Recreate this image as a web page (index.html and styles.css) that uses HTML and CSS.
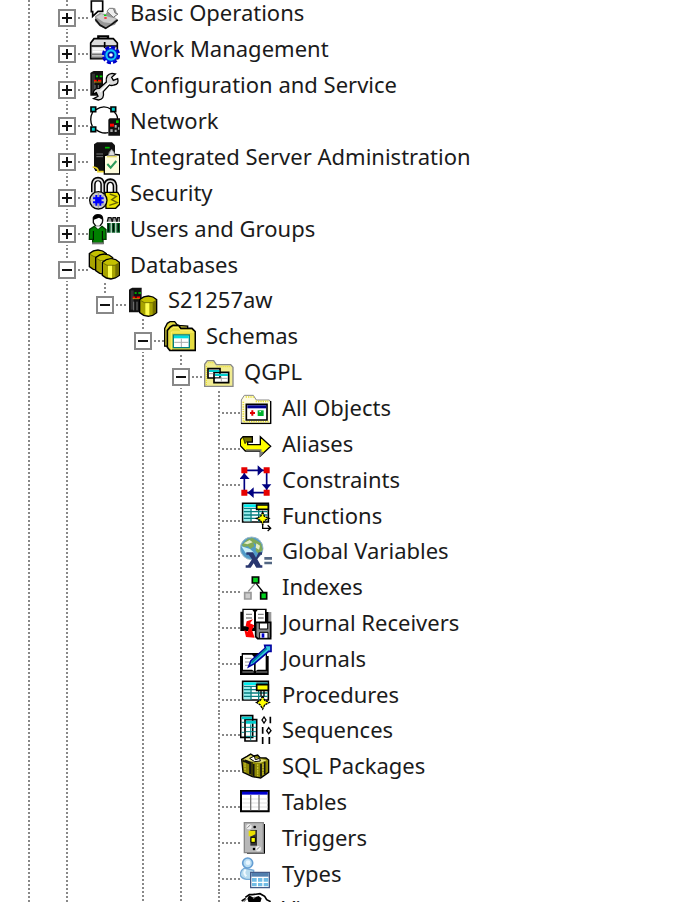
FILE: index.html
```html
<!DOCTYPE html>
<html lang="en">
<head>
<meta charset="utf-8">
<title>System Navigator</title>
<link rel="stylesheet" href="styles.css">
</head>
<body>
<svg class="defs" aria-hidden="true">
  <defs>
    <g id="server"><path d="M4 3l6-3h28v66l-6 8H0V6z" fill="#111"/><path d="M5 8h9v58H5z" fill="#333"/><path d="M17 16h6m5 0h8" stroke="#0c0" stroke-width="5"/><path d="M11 29h8m4 0h10" stroke="#f00" stroke-width="5"/><path d="M11 33h22" stroke="#fc0" stroke-width="2"/><path d="M14 42v26m10-26v26" stroke="#777" stroke-width="3"/></g>
    <g id="drum"><path d="M2 12L14 4l14-3 14 3 11 8v39L41 59l-13 3-14-3L2 51z" fill="#a8a400" stroke="#000" stroke-width="4"/><path d="M5 13l11-7 12-3 13 3 9 7-10 6H16z" fill="#c4c000"/><path d="M19 21h12v38l-12-2z" fill="#ffff50"/><path d="M41 21l10-6v35l-10 7z" fill="#747000"/><path d="M4 14l12 7h24l12-7" fill="none" stroke="#5d5a00" stroke-width="2"/></g>
    <g id="grid"><path d="M2 2h77v56H2z" fill="#fff" stroke="#000" stroke-width="5"/><path d="M5 5h38v8H5z" fill="#0ee"/><path d="M43 5h34v8H43z" fill="#087f80"/><path d="M5 15h20v41H5z" fill="#9ee"/><path d="M5 17h72M5 27h72M5 37h72M5 47h72M27 15v42M50 15v42" stroke="#087f80" stroke-width="4"/></g>
    <g id="window"><path d="M2 2h48v38H2z" fill="#fff" stroke="#008080" stroke-width="4"/><path d="M4 4h44v8H4z" fill="#0dd"/><path d="M5 24h42M26 13v25" stroke="#aaa" stroke-width="3"/></g>
    <g id="lock"><path d="M11 43V18Q13 3 25 3t14 15v25" fill="none" stroke="#000" stroke-width="14"/><path d="M11 43V18Q13 4 25 4t14 14v25" fill="none" stroke="#ddd" stroke-width="5"/></g>
  </defs>
</svg>
<main class="pane">
<ul class="tree">
  <li class="node">
    <ul class="branch">
      <li class="node"><div class="row"><button class="toggle" aria-label="Expand Basic Operations"></button>
        <svg class="icon" viewBox="0 0 96 108"><path d="M10 15h34v31H30L14 61V47H10z" fill="#fff" stroke="#000" stroke-width="5"/><path d="M21 61l14-10 18 3 10-14 18-4 7 19-9 8 11 8-9 15-14 5-15 7-17-7-14-15z" fill="#999"/><path d="M24 63l16-9 21 8 24 6-15 14-23-3z" fill="#ccc"/><path d="M57 46l7-9h12l5 14 9 3-14 10z" fill="#eee" stroke="#777" stroke-width="3"/><path d="M48 58h7" stroke="#0d0" stroke-width="4"/><path d="M49 66h7" stroke="red" stroke-width="4"/><path d="M22 70l14 17 17 10 17-11 19-14" fill="none" stroke="#111" stroke-width="5"/></svg>
        <span class="label">Basic Operations</span></div></li>
      <li class="node"><div class="row"><button class="toggle" aria-label="Expand Work Management"></button>
        <svg class="icon" viewBox="0 0 96 108"><path d="M31 22v-9h29v9" fill="none" stroke="#000" stroke-width="7"/><path d="M8 33l10-13h58l12 13v47H8z" fill="#ddd" stroke="#000" stroke-width="5"/><path d="M10 42h78M50 30v18" stroke="#000" stroke-width="5"/><path d="M14 51h37M14 59h37" stroke="#fff" stroke-width="5"/><path d="M11 67h38M11 76h40" stroke="#777" stroke-width="5"/><circle cx="69" cy="69" r="23" fill="none" stroke="#0000c8" stroke-width="9" stroke-dasharray="12 6"/><circle cx="69" cy="69" r="19" fill="#13c5f5" stroke="#001de0" stroke-width="4"/><circle cx="69" cy="69" r="8" fill="#fff" stroke="#0010b0" stroke-width="5"/></svg>
        <span class="label">Work Management</span></div></li>
      <li class="node"><div class="row"><button class="toggle" aria-label="Expand Configuration and Service"></button>
        <svg class="icon" viewBox="0 0 96 108"><use href="#server" x="7" y="9"/><path d="M82 18l-11 10 5 9 13-5q5 17-11 19-8 3-14 0L46 71q4 24-15 25l-14-4 13-7-5-11-10 4q1-17 19-17l21-19q-3-24 17-26z" fill="#ddd" stroke="#000" stroke-width="4"/><path d="M36 72l28-27" stroke="#fff" stroke-width="4"/></svg>
        <span class="label">Configuration and Service</span></div></li>
      <li class="node"><div class="row"><button class="toggle" aria-label="Expand Network"></button>
        <svg class="icon" viewBox="0 0 96 108"><path d="M24 17Q47 1 70 16m9 9q12 9 9 28M14 24Q3 45 13 67m12 10q14 13 36 9" fill="none" stroke="#000" stroke-width="4"/><path d="M9 9h14v14H9zM69 9h14v14H69zM9 69h14v14H9z" fill="#0cc" stroke="#000" stroke-width="5"/><path d="M65 43h31v52H61V47z" fill="#111"/><path d="M84 49h8v8h-8z" fill="#0c0"/><path d="M66 59h12v9H66z" fill="red"/><path d="M67 76h7v8h-7zm13-13h6v8h-6zm0 14h6v7h-6zm10-7h4v7h-4z" fill="#aaa"/></svg>
        <span class="label">Network</span></div></li>
      <li class="node"><div class="row"><button class="toggle" aria-label="Expand Integrated Server Administration"></button>
        <svg class="icon" viewBox="0 0 96 108"><path d="M18 13l9-6h45l9 9v77H22l-4-8z" fill="#111"/><path d="M25 42h20M25 50h20" stroke="#777" stroke-width="3"/><path d="M51 23h14" stroke="#0b0" stroke-width="5"/><path d="M14 81q18 2 16 14h18" fill="none" stroke="#ecd52a" stroke-width="5"/><path d="M49 47l20-5 26 3v57H49z" fill="#fffddd" stroke="#000" stroke-width="4"/><path d="M61 47q0-10 10-19 9 9 10 19z" fill="#ddd" stroke="#777" stroke-width="3"/><path d="M57 50h29" stroke="#e5d862" stroke-width="4"/><path d="M58 72l10 11 17-20" fill="none" stroke="#2d9b59" stroke-width="6"/></svg>
        <span class="label">Integrated Server Administration</span></div></li>
      <li class="node"><div class="row"><button class="toggle" aria-label="Expand Security"></button>
        <svg class="icon" viewBox="0 0 96 108"><use href="#lock" x="42" y="11"/><path d="M51 49h38l6 10v26L83 97H54z" fill="#e9e400" stroke="#000" stroke-width="4"/><path d="M65 54l20 7-14 10 17 9-24 8" fill="none" stroke="#686300" stroke-width="4"/><use href="#lock" x="5" y="6"/><circle cx="31" cy="73" r="26" fill="#ccc" stroke="#000" stroke-width="4"/><path d="M11 56l39 34M50 56L13 91M31 50v47" stroke="#888" stroke-width="2"/><path d="M25 57v32m12-32v32M15 67h32M15 79h32" stroke="#00f" stroke-width="6"/><circle cx="31" cy="73" r="9" fill="#00f"/></svg>
        <span class="label">Security</span></div></li>
      <li class="node"><div class="row"><button class="toggle" aria-label="Expand Users and Groups"></button>
        <svg class="icon" viewBox="0 0 96 108"><path d="M57 33h11v29H57zM71 33h11v29H71zM85 33h11v29H85z" fill="#075d26"/><path d="M58 29l3-12h8l4 12 2-12h8l4 12 2-12h7v12" fill="#999" stroke="#111" stroke-width="4"/><path d="M61 35v24m15-24v24m15-24v24" stroke="#000" stroke-width="3"/><path d="M16 32V17q6-12 20-8 11 4 7 23L35 43H24z" fill="#fff" stroke="#111" stroke-width="4"/><path d="M16 24V14q8-10 21-5 9 3 6 14L33 17z" fill="#000"/><path d="M5 52l14-9 11 7 12-7 12 10v29H45v12H14V82H4z" fill="#008000" stroke="#003c00" stroke-width="4"/><path d="M21 43l9 8 10-8" fill="#fff"/><path d="M16 57v27m27-27v27" stroke="#000" stroke-width="3"/><path d="M12 94h35" stroke="#777" stroke-width="6"/></svg>
        <span class="label">Users and Groups</span></div></li>
      <li class="node"><div class="row"><button class="toggle open" aria-label="Collapse Databases"></button>
        <svg class="icon" viewBox="0 0 96 108"><use href="#drum" x="2" y="5"/><use href="#drum" x="21" y="17"/><use href="#drum" x="41" y="31"/></svg>
        <span class="label">Databases</span></div>
        <ul class="branch tight">
          <li class="node last"><div class="row"><button class="toggle open" aria-label="Collapse S21257aw"></button>
            <svg class="icon" viewBox="0 0 96 108"><use href="#server" x="9" y="14"/><use href="#drum" x="39" y="38"/></svg>
            <span class="label">S21257aw</span></div>
            <ul class="branch">
              <li class="node"><div class="row"><button class="toggle open" aria-label="Collapse Schemas"></button>
                <svg class="icon" viewBox="0 0 96 108"><path d="M2 81V28l8-15 8-5h14l9 11 30 2v13L19 82z" fill="#e5dc40" stroke="#000" stroke-width="4"/><path d="M17 94L10 85V34l9-10 8-5h17l6 9h34l10 10v56z" fill="#e5dc40" stroke="#000" stroke-width="5"/><path d="M19 34l8-8h16l7 9h34M22 92V39h67" fill="none" stroke="#fff36a" stroke-width="3"/><use href="#window" x="26" y="46"/></svg>
                <span class="label">Schemas</span></div>
                <ul class="branch">
                  <li class="node"><div class="row"><button class="toggle open" aria-label="Collapse QGPL"></button>
                    <svg class="icon" viewBox="0 0 96 108"><path d="M8 94V28l8-11h19l8 12h43l7 8v57z" fill="#f1ec91" stroke="#888" stroke-width="4"/><path d="M13 90V33m6-10h15M44 35h40" stroke="#e9da20" stroke-width="3" stroke-dasharray="3 3"/><path d="M18 41h36v28H18zM36 52h44v31H36z" fill="#fff" stroke="#000" stroke-width="5"/><path d="M21 45h31v6H21zM39 56h39v7H39z" fill="#0cc"/><path d="M21 56h13M40 70h37M58 65v15" stroke="#aaa" stroke-width="3"/></svg>
                    <span class="label">QGPL</span></div>
                    <ul class="branch leaves">
                      <li class="node"><div class="row leaf"><svg class="icon" viewBox="0 0 96 108"><path d="M4 96V27l9-14h27l9 14h39l4 6v65H4z" fill="#fffce0" stroke="#888" stroke-width="3"/><path d="M3 97h89V30" fill="none" stroke="#000" stroke-width="4"/><path d="M10 92V29m7-11h25M47 31h38M12 92h77" stroke="#e6df39" stroke-width="5" stroke-dasharray="4 3"/><path d="M19 40h62v47H19z" fill="#fff" stroke="#000" stroke-width="5"/><path d="M22 43h57v9H22z" fill="#000090"/><path d="M30 66h15m-8-8v16" stroke="#e00000" stroke-width="6"/><path d="M53 58h18v17H53z" fill="#00b52c"/><path d="M58 62h5" stroke="#fff" stroke-width="3"/></svg><span class="label">All Objects</span></div></li>
                      <li class="node"><div class="row leaf"><svg class="icon" viewBox="0 0 96 108"><path d="M1 38l8-9h28v16H23v8h38V29l31 29-31 29V72H16L1 56z" fill="#ff0" stroke="#000" stroke-width="4"/><path d="M9 31h27v13H20l-5 6z" fill="#777400" stroke="#000" stroke-width="2"/><path d="M18 69h44v14l7-8" fill="none" stroke="#777" stroke-width="5"/></svg><span class="label">Aliases</span></div></li>
                      <li class="node"><div class="row leaf"><svg class="icon" viewBox="0 0 96 108"><path d="M13 22h67v67H13z" fill="none" stroke="#000080" stroke-width="5"/><path d="M53 7l17 15-17 16zM65 64h29L80 80zM41 73v32L23 89zM-2 48l15-17 16 17z" fill="#000080"/><path d="M4 13h18v18H4zM71 13h18v18H71zM4 80h18v18H4zM71 80h18v18H71z" fill="#e60000"/></svg><span class="label">Constraints</span></div></li>
                      <li class="node"><div class="row leaf"><svg class="icon" viewBox="0 0 96 108"><use href="#grid" x="6" y="11"/><path d="M50 18h35v13H50z" fill="#ff0" stroke="#000" stroke-width="5"/><path d="M68 39l5 13 14 6-14 7-5 12-6-12-13-7 13-6z" fill="#ff0" stroke="#000" stroke-width="4" stroke-dasharray="7 2"/><path d="M68 76v12h24M83 79l9 9-9 8" fill="none" stroke="#000" stroke-width="4"/></svg><span class="label">Functions</span></div></li>
                      <li class="node"><div class="row leaf"><svg class="icon" viewBox="0 0 96 108"><circle cx="35" cy="43" r="34" fill="#519bc9" stroke="#9dbac6" stroke-width="3"/><path d="M5 33l19-19 15-2 8 10-7 5 3 10-12 8-7-8-12 2zM43 15l20 13 5 20-13 11-8-9 2-17-9-8z" fill="#80a957"/><path d="M11 28l18-10 9 7-16 6zM49 28l11 7-3 12-10-6z" fill="#e4eec6"/><path d="M4 37l26 8 11 10-9 5-15-3z" fill="#c9eef8"/><path d="M19 55h20l9 16 8-16h10v7h-5L52 76l10 18h5v7H49L41 88l-9 13H17v-7h7l12-18-10-14h-7z" fill="#29366f"/><path d="M73 73h23M73 87h23" stroke="#536783" stroke-width="8"/></svg><span class="label">Global Variables</span></div></li>
                      <li class="node"><div class="row leaf"><svg class="icon" viewBox="0 0 96 108"><path d="M45 41L25 64" stroke="#888" stroke-width="4"/><path d="M49 41l20 25" stroke="#000" stroke-width="4"/><path d="M37 21h19v18H37zM62 68h18v19H62z" fill="#00d21c" stroke="#000" stroke-width="5"/><path d="M14 68h19v19H14z" fill="#ccc" stroke="#999" stroke-width="5"/></svg><span class="label">Indexes</span></div></li>
                      <li class="node"><div class="row leaf"><svg class="icon" viewBox="0 0 96 108"><path d="M70 18h24v75H70z" fill="#999"/><path d="M1 17h6V8h73v10h5v57H1z" fill="#000"/><path d="M11 12h26l5 6v48l-6-5H11zM48 18l5-6h22v48H54l-6 6z" fill="#fff"/><path d="M18 25h18M18 36h18M54 25h17M54 36h17" stroke="#888" stroke-width="4"/><path d="M20 46l19-6-9 12 13 6-7 14 8 23-26-2-5-21 10 5 4-12-10-6z" fill="#f00"/><path d="M47 49h45v49H53l-6-6z" fill="#888" stroke="#000" stroke-width="5"/><path d="M58 51h25v18H58zM59 79h25v18H59z" fill="#fff" stroke="#000" stroke-width="3"/><path d="M65 82h8v13h-8z" fill="#0000cc"/></svg><span class="label">Journal Receivers</span></div></li>
                      <li class="node"><div class="row leaf"><svg class="icon" viewBox="0 0 96 108"><path d="M0 42h5v-9h76v9h5v57H0z" fill="#000"/><path d="M9 38h27l6 7v42l-6-4H9zM47 45l6-7h24v45H53l-6 4z" fill="#fff"/><path d="M15 49h20M15 60h18M15 70h11M7 90h34M48 90h34" stroke="#999" stroke-width="3"/><path d="M26 74l7-18 43-38-2-8h19v18h-7L43 65z" fill="#36c8e0" stroke="#0000a0" stroke-width="5"/><path d="M35 62l45-43" stroke="#008a9d" stroke-width="5"/></svg><span class="label">Journals</span></div></li>
                      <li class="node"><div class="row leaf"><svg class="icon" viewBox="0 0 96 108"><use href="#grid" x="6" y="8"/><path d="M50 20h35v17H50z" fill="#ff0" stroke="#000" stroke-width="5"/><path d="M63 39v16m9-16v16" stroke="#000" stroke-width="4"/><path d="M68 54l6 13 14 6-14 8-6 12-7-12-12-8 12-6z" fill="#ff0" stroke="#000" stroke-width="4" stroke-dasharray="7 2"/></svg><span class="label">Procedures</span></div></li>
                      <li class="node"><div class="row leaf"><svg class="icon" viewBox="0 0 96 108"><path d="M2 8h36v65H2zM15 20h35v64H15z" fill="#fff" stroke="#000" stroke-width="5"/><path d="M5 11h31v8H5zM18 23h30v9H18z" fill="#0cc"/><path d="M5 28h8M5 43h8M5 58h8M18 43h30M18 56h30M18 70h30M32 34v48" stroke="#008b8b" stroke-width="3"/><path d="M72 12l-6 9 6 9 6-9zM86 44l-6 9 6 9 7-9z" fill="#fff" stroke="#000" stroke-width="4"/><path d="M91 11v20M68 42v20M68 72v21M88 72v21" stroke="#000" stroke-width="5"/></svg><span class="label">Sequences</span></div></li>
                      <li class="node"><div class="row leaf"><svg class="icon" viewBox="0 0 96 108"><path d="M5 31l16-9 11-7 10 6 11-3 7 8 18 1 8 6v37L62 87 37 83 9 70z" fill="#8c8706" stroke="#000" stroke-width="4"/><path d="M11 31l21-12 17 8 14 3 17 4-18 7-25-2z" fill="#e2e079"/><path d="M15 34l16 7v35M8 35l22 9v31M63 44v39m-22-38v38m33-45v37" fill="none" stroke="#111" stroke-width="5"/><path d="M15 41v27M53 46v36M69 44v34" stroke="#c8c233" stroke-width="4" stroke-dasharray="6 2"/><path d="M29 28l14-7 3 11 13-4 2 8-17 2zM36 38v42" fill="#fff" stroke="#000" stroke-width="3"/></svg><span class="label">SQL Packages</span></div></li>
                      <li class="node"><div class="row leaf"><svg class="icon" viewBox="0 0 96 108"><path d="M3 18h83v61H3z" fill="#fff" stroke="#000" stroke-width="6"/><path d="M6 20h77v9H6z" fill="#0000d0"/><path d="M7 42h76M7 54h76M7 66h76" stroke="#ddd" stroke-width="3"/><path d="M32 30v46M57 30v46" stroke="#777" stroke-width="4"/></svg><span class="label">Tables</span></div></li>
                      <li class="node"><div class="row leaf"><svg class="icon" viewBox="0 0 96 108"><path d="M21 9h54v89H21z" fill="#000"/><path d="M13 5h57v90H13z" fill="#b8b8b8" stroke="#888" stroke-width="4"/><path d="M31 27h20v47H31z" fill="#333"/><path d="M26 29h20v11l-12 6h-8z" fill="#e9df00"/><path d="M33 49h13v15H33z" fill="#ff0" stroke="#000" stroke-width="3"/><circle cx="27" cy="17" r="8" fill="#eee"/><circle cx="55" cy="83" r="8" fill="#eee"/><path d="M22 20l9-8M50 86l9-8" stroke="#888" stroke-width="3"/><circle cx="44" cy="18" r="4"/><circle cx="42" cy="84" r="4"/></svg><span class="label">Triggers</span></div></li>
                      <li class="node"><div class="row leaf"><svg class="icon" viewBox="0 0 96 108"><path d="M13 33q-12 7-12 22 4 9 18 12h22V40z" fill="#b9dcef" stroke="#78abd7" stroke-width="4"/><path d="M17 38q-9 10 2 20" stroke="#eff9ff" stroke-width="6" fill="none"/><circle cx="23" cy="18" r="15" fill="#b9ddf3" stroke="#659ed3" stroke-width="5"/><circle cx="24" cy="17" r="7" fill="#e7f6ff"/><path d="M32 46h56v46H32z" fill="#fff" stroke="#435b87" stroke-width="4"/><path d="M34 48h52v11H34z" fill="#517fae"/><path d="M36 63h14v11H36zm18 0h13v11H54zm17 0h14v11H71zM36 78h14v10H36zm18 0h13v10H54zm17 0h14v10H71z" fill="#71bce5"/></svg><span class="label">Types</span></div></li>
                      <li class="node"><div class="row leaf"><svg class="icon" viewBox="0 0 96 108"><path d="M5 27l12-8m-1-3l12-8h10l22-3 14 8 6 10 12 6" fill="none" stroke="#000" stroke-width="5"/><path d="M27 10l14 7 15-5 9 7-6 18H28l-6-17z" fill="#000"/><path d="M11 29l8-8M39 19l7-4" stroke="#777" stroke-width="4"/></svg><span class="label">Views</span></div></li>
                    </ul>
                  </li>
                </ul>
              </li>
            </ul>
          </li>
        </ul>
      </li>
    </ul>
  </li>
</ul>
</main>
</body>
</html>
```
FILE: styles.css
```css
* { box-sizing: border-box; }

body {
  margin: 0;
  background: #fff;
  color: #1b1b1b;
  font-family: "Noto Sans", sans-serif;
  font-size: 22px;
}

.defs {
  display: block;
  width: 0;
  height: 0;
}

.pane {
  height: 100vh;
  overflow: hidden;
}

ul {
  margin: 0;
  padding: 0;
  list-style: none;
}

.tree {
  margin-top: -4px;
  padding-left: 20px;
}

.branch { margin-left: 38px; }
.tight { margin-top: -1px; }
.leaves > .node:nth-child(5n) { margin-top: -1px; }

.node {
  background: repeating-linear-gradient(to bottom, #888 0 2px, #fff 2px 4px) 8px 0 / 2px 100% no-repeat;
}

.last { background-size: 2px 22px; }

.row {
  display: flex;
  align-items: center;
  height: 36px;
  white-space: nowrap;
  background: repeating-linear-gradient(to right, #888 0 2px, #fff 2px 4px) 20px 21px / 10px 2px no-repeat;
}

.leaf {
  padding-left: 30px;
  background-position: 12px 21px;
  background-size: 18px 2px;
}

.toggle {
  flex: none;
  width: 18px;
  height: 18px;
  margin: 8px 12px 0 0;
  padding: 0;
  border: 2px solid #888;
  border-radius: 0;
  background:
    linear-gradient(#111, #111) center / 10px 2px no-repeat,
    linear-gradient(#111, #111) center / 2px 10px no-repeat,
    #fff;
  box-shadow: 0 0 0 2px #fff;
}

.open {
  background:
    linear-gradient(#111, #111) center / 10px 2px no-repeat,
    #fff;
}

.icon {
  flex: none;
  width: 32px;
  height: 36px;
  margin-right: 10px;
}

.label {
  align-self: flex-start;
  line-height: 32px;
}
```
